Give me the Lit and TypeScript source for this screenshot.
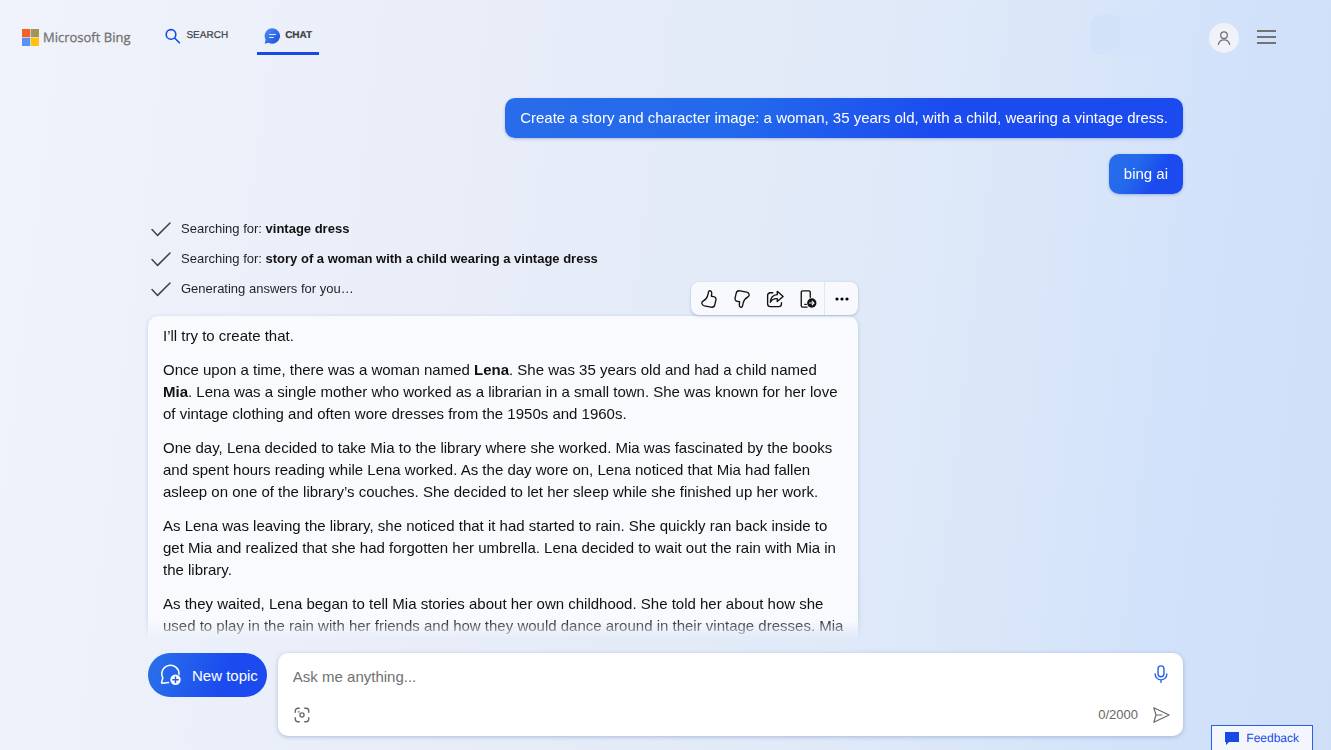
import { LitElement, html, css, svg } from "lit";
import { customElement, state } from "lit/decorators.js";

const stroke = (paths: unknown, size: number, width = 1.3) => html`
  <svg width=${size} height=${size} viewBox="0 0 20 20" fill="none" stroke="currentColor"
    stroke-width=${width} stroke-linecap="round" stroke-linejoin="round" aria-hidden="true">${paths}</svg>`;

const thumb = svg`<path d="M10.800.8c1.300 0 2.300 1.100 2.200 2.700L12.700 6.900l2.300.4c1.900.3 3 1.800 2.700 3.600l-1.200 5.300c-.5 2.200-2.100 3.300-4.300 2.900l-7.300-1.500c-1.300-.3-2.300-1-2.700-2.200-.4-1.300 0-2.300 1.200-3C6.300 10.700 8 8.600 8.600 6l.9-3.900c.2-.8.600-1.300 1.300-1.300z"/>`;
const share = svg`<path d="M7.500 3H5a3.200 3.200 0 0 0-3.200 3.200v9A3.200 3.200 0 0 0 5 18.400h9a3.200 3.200 0 0 0 3.200-3.200v-1"/><path d="M12.500 1.500l6.500 5.700-6.500 5.600V9.700c-3.600-.3-5.800 1-7.700 3.900.3-4.600 3-8 7.700-8.400z"/>`;
const phone = svg`<path d="M12.500 8V2.500A1.500 1.500 0 0 0 11 1H4a1.500 1.500 0 0 0-1.500 1.500v15A1.500 1.500 0 0 0 4 19h5M6.500 16H8"/><circle cx="14.200" cy="14.500" r="5.200" fill="currentColor" stroke="none"/><path d="M11.700 14.500h4.800M14.600 12.400l2.100 2.100-2.100 2.100" stroke="#f7f9fd" stroke-width="1.200"/>`;
const check = svg`<path d="M1 10.600l5.600 5.800L19 4"/>`;

@customElement("app-header")
export class AppHeader extends LitElement {
  static styles = css`
    :host { display: block; }
    header { display: flex; height: 74px; align-items: center; padding: 0 55px 0 22px; box-sizing: border-box; }
    a { color: #3c3f45; text-decoration: none; }
    .brand { display: flex; align-items: center; gap: 4px; font: 13px/20px "Open Sans", sans-serif; color: #737373; -webkit-text-stroke: 0.3px #737373; text-rendering: geometricPrecision; }
    nav { display: flex; align-self: flex-start; gap: 22px; margin-left: 28px; padding-top: 17px; text-rendering: geometricPrecision; }
    .tab { display: flex; align-items: center; gap: 5px; height: 35px; padding: 2px 7px 0; box-sizing: content-box; font-size: 10px; border-bottom: 3px solid transparent; -webkit-text-stroke: 0.2px currentColor; }
    .tab { height: 33px; }
    .tab svg { color: #174ae4; }
    .active { font-weight: bold; border-color: #174ae4; }
    .rewards { width: 110px; height: 40px; margin: 0 0 4px auto; border-radius: 9px; background: linear-gradient(90deg, #d2e2fa, #d2e2fa00); }
    button { border: 0; padding: 0; background: none; display: grid; place-items: center; color: #737373; }
    .avatar { width: 30px; height: 30px; border-radius: 50%; background: #eff2f9; margin: 2px 18px 0 8px; }
  `;
  render() {
    return html`<header>
      <a class="brand" href="#">
        <svg width="17" height="17" viewBox="0 0 17 17" aria-hidden="true">
          <path fill="#f3622a" d="M0 0h8.200v8.200H0z"/><path fill="#a2955a" d="M8.800 0H17v8.200H8.800z"/>
          <path fill="#5594f2" d="M0 8.800h8.200V17H0z"/><path fill="#ffc20e" d="M8.800 8.800H17V17H8.800z"/>
        </svg>
        <span>Microsoft Bing</span>
      </a>
      <nav>
        <a class="tab" href="#search">
          ${stroke(svg`<circle cx="7.500" cy="8" r="6"/><path d="M12 12.500l6 6"/>`, 16, 2)}
          <span>SEARCH</span>
        </a>
        <a class="tab active" href="#chat" aria-current="page">
          <svg width="16" height="16" viewBox="0 0 16 16" aria-hidden="true">
            <defs><linearGradient id="bubble" x1="0" y1="0" x2="1" y2="1"><stop stop-color="#4b93f2"/><stop offset="1" stop-color="#1b49df"/></linearGradient></defs>
            <path fill="url(#bubble)" d="M8.200.3a7.700 7.700 0 1 1-3.500 14.500L.7 15.800l.9-4A7.700 7.700 0 0 1 8.200.3z"/>
            <path d="M5.500 6.500h6M5.500 9.500h3.800" stroke="#dbe9ff" stroke-width="1.200" stroke-linecap="round"/>
          </svg>
          <span>CHAT</span>
        </a>
      </nav>
      <div class="rewards"></div>
      <button class="avatar" aria-label="Account">
        ${stroke(svg`<circle cx="10" cy="6" r="4.700"/><path d="M2 19a8.200 8.200 0 0 1 16 0"/>`, 14, 1.900)}
      </button>
      <button aria-label="Menu">
        <svg width="19" height="16" viewBox="0 0 19 16" aria-hidden="true"><path d="M0 2h19M0 8h19M0 14h19" stroke="currentColor" stroke-width="2"/></svg>
      </button>
    </header>`;
  }
}

@customElement("chat-thread")
export class ChatThread extends LitElement {
  static styles = css`
    :host { display: flex; flex-direction: column; min-height: 0; overflow: hidden; padding: 24px 10px 0; margin: 0 -10px;
      -webkit-mask-image: linear-gradient(to bottom, #000 calc(100% - 20px), transparent); mask-image: linear-gradient(to bottom, #000 calc(100% - 20px), transparent); }
    .bubble { align-self: flex-end; flex: none; margin-bottom: 16px; padding: 9px 15px; border-radius: 10px; color: #fff; font-size: 15px; line-height: 22px;
      background: linear-gradient(120deg, #286cea 0%, #2369ec 35%, #1b4aef 65%); box-shadow: 0 1px 3px #2a4a9050; }
    ul { list-style: none; margin: 9px 0 0; padding: 0 0 0 3px; display: flex; flex: none; flex-direction: column; gap: 10px; font-size: 13px; line-height: 20px; }
    li { display: flex; align-items: center; gap: 10px; height: 20px; color: #1f2023; }
    li svg { color: #3f4247; }
    b { color: #111; }
    .answer { position: relative; flex: none; box-sizing: border-box; width: 100%; max-width: 710px; margin-top: 17px; padding: 9px 10px 15px 15px; border-radius: 10px;
      background: #f9fafe; box-shadow: 0 1px 4px #4a69a540; font-size: 15px; line-height: 22px; color: #111; }
    p { margin: 0 0 12px; }
    .actions { position: absolute; right: 0; top: -34px; display: flex; height: 33px; padding-left: 1px; border-radius: 8px; background: #f7f9fd; box-shadow: 0 1px 3px #4a69a560; }
    .actions button { box-sizing: border-box; width: 33px; padding: 0; border: 0; background: none; display: grid; place-items: center; color: #111; }
    .actions .more { width: 34px; border-left: 1px solid #e1e5ef; }
    .down { transform: rotate(180deg); display: grid; }
  `;
  render() {
    return html`
      <div class="bubble">Create a story and character image: a woman, 35 years old, with a child, wearing a vintage dress.</div>
      <div class="bubble">bing ai</div>
      <ul>
        <li>${stroke(check, 20, 1.5)}<span>Searching for: <b>vintage dress</b></span></li>
        <li>${stroke(check, 20, 1.5)}<span>Searching for: <b>story of a woman with a child wearing a vintage dress</b></span></li>
        <li>${stroke(check, 20, 1.5)}<span>Generating answers for you…</span></li>
      </ul>
      <article class="answer">
        <div class="actions">
          <button aria-label="Like">${stroke(thumb, 18, 1.5)}</button>
          <button aria-label="Dislike"><span class="down">${stroke(thumb, 18, 1.5)}</span></button>
          <button aria-label="Share">${stroke(share, 18, 1.5)}</button>
          <button aria-label="Send to phone">${stroke(phone, 18, 1.5)}</button>
          <button class="more" aria-label="More">
            <svg width="14" height="4" viewBox="0 0 14 4" aria-hidden="true"><circle cx="2" cy="2" r="1.600"/><circle cx="7" cy="2" r="1.600"/><circle cx="12" cy="2" r="1.600"/></svg>
          </button>
        </div>
        <p>I’ll try to create that.</p>
        <p>Once upon a time, there was a woman named <b>Lena</b>. She was 35 years old and had a child named <b>Mia</b>. Lena was a single mother who worked as a librarian in a small town. She was known for her love of vintage clothing and often wore dresses from the 1950s and 1960s.</p>
        <p>One day, Lena decided to take Mia to the library where she worked. Mia was fascinated by the books and spent hours reading while Lena worked. As the day wore on, Lena noticed that Mia had fallen asleep on one of the library’s couches. She decided to let her sleep while she finished up her work.</p>
        <p>As Lena was leaving the library, she noticed that it had started to rain. She quickly ran back inside to get Mia and realized that she had forgotten her umbrella. Lena decided to wait out the rain with Mia in the library.</p>
        <p>As they waited, Lena began to tell Mia stories about her own childhood. She told her about how she used to play in the rain with her friends and how they would dance around in their vintage dresses. Mia</p>
      </article>`;
  }
}

@customElement("chat-composer")
export class ChatComposer extends LitElement {
  static styles = css`
    :host { display: flex; align-items: flex-start; gap: 11px; }
    button { border: 0; padding: 0; background: none; display: grid; place-items: center; font: inherit; color: inherit; }
    .topic { display: flex; align-items: center; gap: 10px; height: 44px; padding: 0 9px 0 12px; border-radius: 22px; color: #fff; font-size: 15px; white-space: nowrap;
      background: linear-gradient(110deg, #286cea 10%, #1b4aef 65%); }
    .box { flex: 1; min-width: 0; box-sizing: border-box; padding: 12px 13px 12px 15px; border-radius: 10px; background: #fff; box-shadow: 0 1px 4px #4a69a560; color: #666; }
    .row { display: flex; align-items: flex-start; }
    .row + .row { margin-top: 19px; gap: 14px; align-items: center; }
    input { flex: 1; min-width: 0; height: 22px; border: 0; padding: 0; outline: 0; background: none; font: inherit; font-size: 15px; color: #222; }
    input::placeholder { color: #707070; opacity: 1; }
    .mic { color: #1f5be8; }
    .count { margin-left: auto; font-size: 13px; line-height: 18px; }
  `;
  @state() private text = "";
  render() {
    return html`
      <button class="topic">
        <svg width="22" height="22" viewBox="0 0 22 22" fill="none" stroke="currentColor" stroke-width="1.500" stroke-linecap="round" stroke-linejoin="round" aria-hidden="true">
          <path d="M19 10.500A8.600 8.600 0 1 0 2.800 13.800L1.600 18.400q-.2.900.7.800L8.500 18.600"/><circle cx="15.500" cy="15.700" r="5.200" fill="#fff" stroke="none"/><path d="M15.500 13v5.400M12.800 15.700h5.400" stroke="#2259ea"/>
        </svg>
        <span>New topic</span>
      </button>
      <div class="box">
        <div class="row">
          <input aria-label="Ask me anything" placeholder="Ask me anything..." maxlength="2000" .value=${this.text}
            @input=${(e: Event) => (this.text = (e.target as HTMLInputElement).value)} />
          <button class="mic" aria-label="Use microphone">${stroke(svg`<rect x="6.700" y="1" width="6.600" height="12" rx="3.300"/><path d="M3.500 10a6.500 6.500 0 0 0 13 0M10 16.500v2.800"/>`, 18, 1.5)}</button>
        </div>
        <div class="row">
          <button aria-label="Add an image">${stroke(svg`<path d="M2.500 7V5.500a3 3 0 0 1 3-3H7M13 2.500h1.500a3 3 0 0 1 3 3V7M17.500 13v1.500a3 3 0 0 1-3 3H13M7 17.500H5.500a3 3 0 0 1-3-3V13"/><circle cx="10" cy="10" r="2.300"/><circle cx="6.300" cy="6.300" r=".3"/>`, 18, 1.5)}</button>
          <span class="count">${this.text.length}/2000</span>
          <button aria-label="Send">${stroke(svg`<path d="M2 2l17 8L2 18l2.500-8zM4.500 10H11"/>`, 18, 1.3)}</button>
        </div>
      </div>`;
  }
}

@customElement("app-root")
export class AppRoot extends LitElement {
  static styles = css`
    :host { display: flex; flex-direction: column; height: 100vh; overflow: hidden; font-family: "Liberation Sans", Arial, sans-serif;
      background: linear-gradient(97deg, #f0f3fb 0%, #e8edf8 36%, #e1eaf8 60%, #d9e6f9 77%, #d2e2fa 86%, #cfdff7 100%); }
    main { flex: 1; min-height: 0; display: flex; flex-direction: column; width: calc(100% - 48px); max-width: 1035px; margin: 0 auto; }
    chat-thread { flex: 1; }
    chat-composer { margin: 14px 0; }
    .feedback { position: fixed; right: 18px; bottom: 0; display: flex; align-items: center; gap: 7px; height: 25px; padding: 0 13px; box-sizing: border-box;
      border: 1px solid #2a5fe6; border-bottom: 0; background: #f3f6fd; color: #174ae4; font: 12px "Liberation Sans", Arial, sans-serif; text-rendering: geometricPrecision; }
  `;
  render() {
    return html`
      <app-header></app-header>
      <main>
        <chat-thread></chat-thread>
        <chat-composer></chat-composer>
      </main>
      <button class="feedback">
        <svg width="14" height="13" viewBox="0 0 14 13" aria-hidden="true"><path fill="currentColor" d="M0 0h14v10H4l-3 3v-3H0z"/></svg>
        <span>Feedback</span>
      </button>`;
  }
}
